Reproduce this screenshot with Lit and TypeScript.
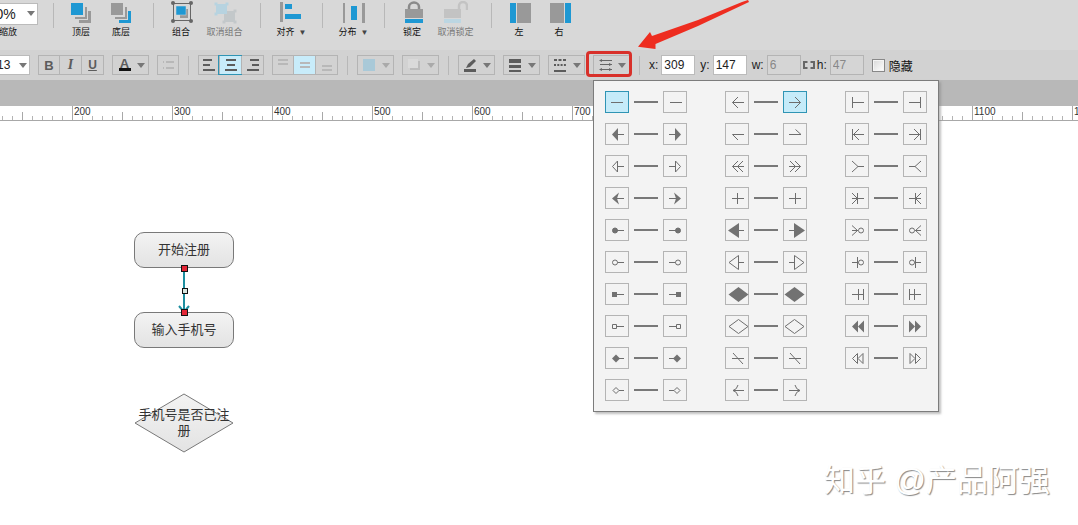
import { LitElement, html, svg, css, type SVGTemplateResult } from "lit";
import { customElement, property, state } from "lit/decorators.js";
import { classMap } from "lit/directives/class-map.js";

type Shape = SVGTemplateResult;

interface Ending {
  name: string;
  left: Shape;
  right?: Shape;
}

const line = (d: string): Shape => svg`<path d=${d} fill="none" stroke="#6e6e6e"/>`;
const solid = (d: string): Shape => svg`<path d=${d} fill="#727272" stroke="none"/>`;
const dot = (cx: number, r: number, fill: string): Shape =>
  svg`<circle cx=${cx} cy="11.5" r=${r} fill=${fill} stroke="#6e6e6e"/>`;

const ENDINGS: Ending[] = [
  { name: "none", left: line("M6 11.5H18") },
  { name: "solid triangle", left: svg`${solid("M7 11.5L13 5V18Z")}${line("M12 11.5H19")}` },
  { name: "open triangle", left: line("M7.5 11.5L12.5 6V17ZM12.5 11.5H19") },
  { name: "stealth", left: svg`${solid("M7 11.5L14 5.5L12 11.5L14 17.5Z")}${line("M11 11.5H19")}` },
  { name: "solid circle", left: svg`${dot(10, 2.5, "#727272")}${line("M12 11.5H19")}` },
  { name: "open circle", left: svg`${dot(10, 2.5, "none")}${line("M12.5 11.5H19")}` },
  { name: "solid square", left: svg`${solid("M7 9H12V14H7Z")}${line("M12 11.5H19")}` },
  { name: "open square", left: line("M7.5 9.5H11.5V13.5H7.5ZM11.5 11.5H19") },
  { name: "solid small diamond", left: svg`${solid("M7 11.5L11 7.5L15 11.5L11 15.5Z")}${line("M14 11.5H19")}` },
  { name: "open small diamond", left: line("M8 11.5L11 8.5L14 11.5L11 14.5ZM14 11.5H19") },

  { name: "arrow", left: line("M19 11.5H7.5M13 6L7.5 11.5L13 17") },
  { name: "half arrow", left: line("M19 11.5H7.5L13 17"), right: line("M6 11.5H18L12.5 6.5") },
  { name: "double arrow", left: line("M19 11.5H7.5M13 6L7.5 11.5L13 17M18 6L12.5 11.5L18 17") },
  { name: "cross", left: line("M7 11.5H19M12.5 6V17") },
  { name: "large solid triangle", left: svg`${solid("M3 11.5L14 4V19Z")}${line("M14 11.5H19")}` },
  { name: "large open triangle", left: line("M4 11.5L13.5 4.5V18.5ZM13.5 11.5H19") },
  { name: "large solid diamond", left: solid("M3.5 11.5L13.5 4L23.5 11.5L13.5 19Z") },
  { name: "large open diamond", left: line("M4 11.5L13.5 4.5L23 11.5L13.5 18.5Z") },
  { name: "slash", left: line("M7 11.5H19M8 6L18 17"), right: line("M6 11.5H18M7 6L17 17") },
  { name: "curved arrow", left: line("M19 11.5H8M13 6Q12 10.5 8 11.5Q12 12.5 13 17") },

  { name: "bar", left: line("M7.5 6V17M7.5 11.5H19") },
  { name: "bar arrow", left: line("M7.5 6V17M19 11.5H8M14 6L8.5 11.5L14 17") },
  { name: "many", left: line("M7 6L13 11.5L7 17M13 11.5H19") },
  { name: "one or many", left: line("M7 6L12.5 11.5L7 17M12.5 6V17M7 11.5H19") },
  { name: "zero or many", left: svg`${line("M7 6.5L12.5 11.5L7 16.5M7 11.5H13")}${dot(16, 2.5, "none")}` },
  { name: "zero or one", left: svg`${line("M7 11.5H13.5M12.5 6V17")}${dot(16, 2.5, "none")}` },
  { name: "one and only one", left: line("M7 11.5H19M13.5 6V17M18.5 6V17") },
  { name: "solid double triangle", left: solid("M7 11.5L13 5.5V17.5ZM13 11.5L19 5.5V17.5Z") },
  { name: "open double triangle", left: line("M7.5 11.5L12.5 6.5V16.5ZM13 11.5L18 6.5V16.5Z") },
];

const caret = html`<svg class="caret" width="8" height="5" viewBox="0 0 8 5" aria-hidden="true"><path d="M0 0H8L4 5Z" fill="currentColor"/></svg>`;

const bars = (rects: number[][]) => html`<svg width="20" height="18" viewBox="0 0 20 18" aria-hidden="true">
  ${rects.map(([x, y, w]) => svg`<rect x=${x} y=${y} width=${w} height="2" fill="currentColor"/>`)}
</svg>`;

const bigIcon = (content: Shape) => html`<svg width="24" height="24" viewBox="0 0 24 24" aria-hidden="true">${content}</svg>`;

const ICONS = {
  front: bigIcon(svg`<rect x="10" y="10" width="12" height="12" fill="#999"/><rect x="5" y="5" width="14" height="14" fill="#d8d8d8"/><rect x="6" y="6" width="12" height="12" fill="#999"/><rect x="1" y="1" width="15" height="15" fill="#d8d8d8"/><rect x="2" y="2" width="12" height="12" fill="#1e98d3"/>`),
  back: bigIcon(svg`<rect x="10" y="10" width="12" height="12" fill="#1e98d3"/><rect x="5" y="5" width="14" height="14" fill="#d8d8d8"/><rect x="6" y="6" width="12" height="12" fill="#999"/><rect x="1" y="1" width="15" height="15" fill="#d8d8d8"/><rect x="2" y="2" width="12" height="12" fill="#999"/>`),
  group: bigIcon(svg`<rect x="4.500" y="2.500" width="17" height="17" fill="none" stroke="#666"/><rect x="11" y="8" width="8" height="9" fill="#999"/><rect x="7" y="5" width="10" height="9" fill="#1e98d3" stroke="#d8d8d8" stroke-width=".5"/><g fill="#666"><circle cx="4" cy="2" r="2"/><circle cx="22" cy="2" r="2"/><circle cx="4" cy="20" r="2"/><circle cx="22" cy="20" r="2"/></g>`),
  ungroup: bigIcon(svg`<g fill="#c3c8ca"><rect x="11" y="10" width="11" height="11"/><rect x="9.500" y="8.500" width="3" height="3"/><rect x="20.500" y="8.500" width="3" height="3"/><rect x="9.500" y="19.500" width="3" height="3"/><rect x="20.500" y="19.500" width="3" height="3"/></g><g fill="#b7d3e0"><rect x="3" y="3" width="11" height="10"/><rect x="1.500" y="1.500" width="3" height="3"/><rect x="12.500" y="1.500" width="3" height="3"/><rect x="1.500" y="11.500" width="3" height="3"/></g>`),
  align: bigIcon(svg`<rect x="0" y="1" width="3" height="20" fill="#999"/><rect x="5" y="3" width="7" height="5" fill="#1e98d3"/><rect x="5" y="13" width="16" height="5" fill="#1e98d3"/>`),
  distribute: bigIcon(svg`<rect x="1" y="2" width="2" height="20" fill="#999"/><rect x="20" y="2" width="3" height="20" fill="#999"/><rect x="9" y="5" width="6" height="14" fill="#1e98d3"/>`),
  lock: bigIcon(svg`<path d="M9 9V6a5 4.500 0 0 1 10 0V9" fill="none" stroke="#8a8a8a" stroke-width="2.500"/><rect x="5" y="8" width="18" height="9" fill="#999"/><rect x="5" y="18" width="18" height="4" fill="#1e98d3"/>`),
  unlock: bigIcon(svg`<path d="M15 9V5a4 4 0 0 1 8 0V9" fill="none" stroke="#c3c3c3" stroke-width="2.500"/><rect x="0" y="8" width="17" height="9" fill="#c3c3c3"/><rect x="0" y="18" width="17" height="4" fill="#bcd6e2"/>`),
  left: bigIcon(svg`<rect x="3" y="2" width="6" height="20" fill="#1e98d3"/><rect x="10" y="2" width="14" height="20" fill="#999"/>`),
  right: bigIcon(svg`<rect x="3" y="2" width="14" height="20" fill="#999"/><rect x="18" y="2" width="6" height="20" fill="#1e98d3"/>`),
};

@customElement("ending-picker")
class EndingPicker extends LitElement {
  @state() private start = 0;
  @state() private end = 10;

  static styles = css`
    :host {
      display: grid;
      grid-template-rows: repeat(10, 22px);
      grid-auto-flow: column;
      grid-auto-columns: max-content;
      gap: 10px 38px;
      padding: 10px 11px;
      background: #f3f3f3;
      border: 1px solid #7c7c7c;
      box-shadow: 2px 2px 2px #8888;
    }
    .pair { display: flex; align-items: center; gap: 5px; }
    .rule { width: 24px; height: 2px; background: #787878; }
    .cell {
      width: 24px;
      height: 22px;
      padding: 0;
      background: #f3f3f3;
      border: 1px solid #b4b4b4;
    }
    .cell svg { display: block; overflow: visible; }
    .chosen { background: #c5ebf9; border-color: #2f94b4; }
    .flip { transform: translateX(25px) scaleX(-1); }
  `;

  private cell(i: number, side: "left" | "right") {
    const e = ENDINGS[i];
    const chosen = side === "left" ? this.start === i : this.end === i;
    const shape = side === "left" ? e.left : e.right ?? svg`<g class="flip">${e.left}</g>`;
    return html`<button
      class=${classMap({ cell: true, chosen })}
      aria-label=${`${side} ${e.name}`}
      aria-pressed=${chosen}
      @click=${() => (side === "left" ? (this.start = i) : (this.end = i))}
    ><svg width="22" height="20" viewBox="1 1 22 20">${shape}</svg></button>`;
  }

  render() {
    return ENDINGS.map((_, i) => html`<div class="pair">
      ${this.cell(i, "left")}<span class="rule"></span>${this.cell(i, "right")}
    </div>`);
  }
}

@customElement("canvas-ruler")
class CanvasRuler extends LitElement {
  @property({ type: Number }) from = 200;

  private refresh = () => this.requestUpdate();

  connectedCallback() {
    super.connectedCallback();
    window.addEventListener("resize", this.refresh);
  }

  disconnectedCallback() {
    window.removeEventListener("resize", this.refresh);
    super.disconnectedCallback();
  }

  static styles = css`
    :host {
      display: flex;
      height: 14px;
      overflow: hidden;
      background: #fff;
      border-bottom: 1px solid #a8a8a8;
    }
    .segment {
      flex: none;
      box-sizing: border-box;
      width: 100px;
      border-left: 1px solid #a8a8a8;
      padding-left: 1px;
      font-size: 10px;
      line-height: 12px;
      color: #333;
      background:
        linear-gradient(#a8a8a8, #a8a8a8) 49px 100% / 1px 8px no-repeat,
        repeating-linear-gradient(to right, transparent 0 9px, #b4b4b4 9px 10px) 0 100% / 100% 4px no-repeat;
    }
    .segment:first-child { margin-left: -28px; }
  `;

  render() {
    const count = Math.ceil((window.innerWidth - 72) / 100);
    return html`<span class="segment"></span>${Array.from(
      { length: count },
      (_, i) => html`<span class="segment">${this.from + i * 100}</span>`
    )}`;
  }
}

@customElement("app-root")
class AppRoot extends LitElement {
  @state() private pickerOpen = true;

  static styles = css`
    :host {
      display: flex;
      flex-direction: column;
      min-height: 100vh;
      overflow: hidden;
      background: #fff;
      color: #222;
      font-family: "Liberation Sans", "Noto Sans CJK SC", sans-serif;
      font-size: 12px;
    }
    button, select, input { font: inherit; color: inherit; border-radius: 0; }
    svg { display: block; }

    .main-bar { display: flex; height: 50px; background: #d8d8d8; }
    .group { display: flex; padding: 0 12px 0 7px; }
    .single { padding: 0; }
    .divider { flex: none; width: 1px; height: 25px; margin-top: 3px; background: #b8b8b8; }
    .tool {
      display: flex;
      flex-direction: column;
      align-items: center;
      width: 40px;
      padding: 1px 0 0;
      border: 0;
      background: none;
      font-size: 9px;
      line-height: 14px;
      white-space: nowrap;
      color: #111;
    }
    .wide { width: 47px; }
    .menu { width: 61px; }
    .tool:disabled { color: #777; }
    .down { margin-left: 4px; font-size: 8px; color: #444; }
    .zoom {
      display: flex;
      flex-direction: column;
      align-items: center;
      width: 60px;
      margin: 3px 15px 0 -22px;
      font-size: 9px;
      line-height: 14px;
      color: #111;
    }
    .picker { position: relative; color: #222; font-size: 12px; }
    .picker select {
      display: block;
      box-sizing: border-box;
      height: 20px;
      padding: 0 2px;
      background: #fff;
      border: 1px solid #bbb;
      appearance: none;
    }
    .picker .caret { position: absolute; right: 3px; top: 8px; color: #777; pointer-events: none; }
    .zoom .picker { width: 60px; font-size: 14px; }
    .zoom select { width: 60px; height: 22px; padding: 0 1px; }
    .size { width: 56px; margin-left: -26px; font-size: 12px; }
    .size select { width: 56px; padding-left: 22px; }

    .style-bar {
      display: flex;
      align-items: center;
      gap: 8px;
      height: 30px;
      background: #d2d2d2;
    }
    .style-bar .divider { height: 19px; margin: 0 1px; }
    .buttons { display: flex; border: 1px solid #b4b4b4; }
    .buttons button {
      display: flex;
      align-items: center;
      justify-content: center;
      width: 20px;
      height: 18px;
      padding: 0;
      border: 0;
      background: none;
      color: #5c5c5c;
      font-size: 13px;
    }
    .buttons button + button { width: 22px; border-left: 1px solid #b4b4b4; }
    .buttons button.on { background: #c8ecfa; outline: 1px solid #2f94b4; }
    .buttons button.soft { background: #c8ecfa; }
    .buttons button:disabled { color: #b8b8b8; }
    .bold { font-weight: bold; }
    .buttons .italic { font: italic bold 14px "Liberation Serif", serif; }
    .buttons .underline { font-weight: bold; font-size: 12px; text-decoration: underline; }
    .drop {
      box-sizing: border-box;
      display: flex;
      align-items: center;
      justify-content: space-between;
      width: 37px;
      height: 20px;
      padding: 0 3px 0 1px;
      border: 1px solid #b4b4b4;
      background: none;
      color: #5c5c5c;
    }
    .drop .caret { color: #777; }
    .drop:disabled .caret { color: #aaa; }

    .ending { position: relative; z-index: 2; }
    .frame {
      position: absolute;
      inset: -4px -2px -2px -7px;
      border: 3px solid #d8302a;
      border-radius: 4px;
      pointer-events: none;
    }
    .pointer { position: absolute; left: 45px; bottom: 24px; pointer-events: none; }
    .popup { position: absolute; left: 0; top: 25px; }

    .fields { display: flex; align-items: center; gap: 5px; }
    .fields label { display: flex; align-items: center; gap: 3px; }
    .fields input[type="text"] {
      box-sizing: border-box;
      width: 34px;
      height: 20px;
      padding: 0 2px;
      border: 1px solid #bbb;
      background: #fff;
    }
    .fields input[type="text"]:disabled { background: #d5d5d5; color: #888; border-color: #b4b4b4; }
    .linked { display: flex; align-items: center; gap: 2px; }
    .fields .hide { margin-left: 3px; gap: 4px; color: #111; }
    .hide input {
      width: 13px;
      height: 13px;
      margin: 0;
      appearance: none;
      border: 1px solid #888;
      background: linear-gradient(135deg, #d8d8d8, #fff);
      box-shadow: inset 0 0 0 1px #f4f4f4;
    }

    .tabs { height: 26px; background: #b8b8b8; }

    .canvas { position: relative; flex: 1; font-size: 13px; line-height: 16px; color: #333; }
    .node {
      position: absolute;
      box-sizing: border-box;
      display: flex;
      align-items: center;
      justify-content: center;
      left: 134px;
      width: 100px;
      height: 36px;
      border: 1px solid #797979;
      border-radius: 10px;
      background: linear-gradient(#f3f3f3, #e3e3e3);
    }
    .begin { top: 111px; }
    .phone { top: 191px; }
    .decision { position: absolute; left: 134px; top: 272px; width: 100px; height: 60px; }
    .decision svg { position: absolute; inset: 0; }
    .decision span {
      position: relative;
      display: flex;
      align-items: center;
      height: 100%;
      padding: 0 3px;
      text-align: center;
    }
    .connector { position: absolute; left: 176px; top: 143px; }
    .credit {
      position: absolute;
      right: 28px;
      bottom: 26px;
      font-size: 31px;
      line-height: 36px;
      color: #fff;
      text-shadow: 1px 1px 1px #888;
    }
  `;

  private tool(icon: unknown, label: string, size = "", disabled = false) {
    const menu = size === "menu";
    return html`<button class=${`tool ${size}`} ?disabled=${disabled}>
      ${icon}<span>${label}${menu ? html`<span class="down">▼</span>` : ""}</span>
    </button>`;
  }

  private drop(name: string, icon: unknown, disabled = false) {
    return html`<button class="drop" aria-label=${name} ?disabled=${disabled}>${icon}${caret}</button>`;
  }

  private field(name: string, value: string, disabled = false) {
    return html`<label>${name}:<input type="text" .value=${value} ?disabled=${disabled}></label>`;
  }

  private mainBar() {
    const divider = html`<span class="divider"></span>`;
    return html`<div class="main-bar">
      <div class="zoom">
        <div class="picker"><select id="zoom"><option>100%</option></select>${caret}</div>
        <label for="zoom">缩放</label>
      </div>
      ${divider}
      <div class="group">${this.tool(ICONS.front, "顶层")}${this.tool(ICONS.back, "底层")}</div>
      ${divider}
      <div class="group">${this.tool(ICONS.group, "组合")}${this.tool(ICONS.ungroup, "取消组合", "wide", true)}</div>
      ${divider}
      <div class="group single">${this.tool(ICONS.align, "对齐", "menu")}</div>
      ${divider}
      <div class="group single">${this.tool(ICONS.distribute, "分布", "menu")}</div>
      ${divider}
      <div class="group">${this.tool(ICONS.lock, "锁定")}${this.tool(ICONS.unlock, "取消锁定", "wide", true)}</div>
      ${divider}
      <div class="group">${this.tool(ICONS.left, "左")}${this.tool(ICONS.right, "右")}</div>
    </div>`;
  }

  private styleBar() {
    const divider = html`<span class="divider"></span>`;
    const icon = (content: Shape) => html`<svg width="22" height="18" viewBox="0 0 22 18" aria-hidden="true">${content}</svg>`;
    return html`<div class="style-bar">
      <div class="picker size"><select aria-label="font size"><option>13</option></select>${caret}</div>
      <div class="buttons">
        <button class="bold">B</button><button class="italic">I</button><button class="underline">U</button>
      </div>
      ${this.drop("text colour", icon(svg`<text x="10.500" y="12" text-anchor="middle" font-size="13" font-weight="bold" fill="#5c5c5c">A</text><rect x="5" y="12" width="12" height="3" fill="#111"/>`))}
      <div class="buttons"><button disabled aria-label="list">${bars([[5, 5, 1], [8, 5, 8], [5, 11, 1], [8, 11, 8]])}</button></div>
      ${divider}
      <div class="buttons">
        <button aria-label="align left">${bars([[4, 3, 9], [4, 8, 7], [4, 13, 12]])}</button>
        <button class="on" aria-label="align centre">${bars([[5, 3, 10], [6, 8, 8], [4, 13, 12]])}</button>
        <button aria-label="align right">${bars([[7, 3, 9], [9, 8, 7], [4, 13, 12]])}</button>
      </div>
      <div class="buttons">
        <button disabled aria-label="top">${bars([[5, 3, 10], [5, 7, 10]])}</button>
        <button disabled class="soft" aria-label="middle">${bars([[5, 6, 10], [5, 10, 10]])}</button>
        <button disabled aria-label="bottom">${bars([[5, 9, 10], [5, 13, 10]])}</button>
      </div>
      ${divider}
      ${this.drop("fill", icon(svg`<rect x="4" y="3" width="12" height="12" fill="#a9c9d8"/>`), true)}
      ${this.drop("shadow", icon(svg`<path d="M6 13H15V5" fill="none" stroke="#bcbcbc" stroke-width="2"/><rect x="4" y="3" width="10" height="9" fill="#dadada"/>`), true)}
      ${divider}
      ${this.drop("line colour", icon(svg`<rect x="4" y="13" width="12" height="3" fill="#5c5c5c"/><path d="M6 12L8 8L14 3L16 5L10 11Z" fill="#5c5c5c"/>`))}
      ${this.drop("line width", icon(svg`<rect x="4" y="3" width="12" height="4" fill="#5c5c5c"/><rect x="4" y="9" width="12" height="3" fill="#5c5c5c"/><rect x="4" y="14" width="12" height="2" fill="#5c5c5c"/>`))}
      ${this.drop("line style", icon(svg`<g stroke="#5c5c5c" stroke-width="2"><path d="M4 4H16" stroke-dasharray="3 1.500"/><path d="M4 9H16" stroke-dasharray="2 1.300"/><path d="M4 15H16"/></g>`))}
      <div class="ending">
        <button class="drop" aria-label="line endings" aria-expanded=${this.pickerOpen} @click=${() => (this.pickerOpen = !this.pickerOpen)}>
          ${icon(svg`<g stroke="#666" fill="#666"><path d="M5 4.500H17M5 8.500H17M5 13.500H17"/><path d="M4 4.500L7 3V6ZM17 8.500L14 7V10ZM4 13.500L7 12V15ZM17 13.500L14 12V15Z" stroke="none"/></g>`)}${caret}
        </button>
        <span class="frame"></span>
        <svg class="pointer" width="112" height="51" viewBox="0 0 112 51" aria-hidden="true">
          <path d="M0 46.700L12 32L14 36L60 20L104 2L110 0L111 2L60 26L17.500 44V49Z" fill="#ee2d20"/>
        </svg>
        ${this.pickerOpen ? html`<ending-picker class="popup"></ending-picker>` : ""}
      </div>
      ${divider}
      <div class="fields">
        ${this.field("x", "309")}${this.field("y", "147")}
        <div class="linked">
          ${this.field("w", "6", true)}
          <svg width="12" height="10" viewBox="0 0 12 10" aria-hidden="true"><path d="M4.500 2H1V8H4.500M7.500 2H11V8H7.500" fill="none" stroke="#666" stroke-width="2"/></svg>
          ${this.field("h", "47", true)}
        </div>
        <label class="hide"><input type="checkbox">隐藏</label>
      </div>
    </div>`;
  }

  render() {
    return html`
      ${this.mainBar()}
      ${this.styleBar()}
      <div class="tabs"></div>
      <canvas-ruler from="200"></canvas-ruler>
      <div class="canvas">
        <div class="node begin">开始注册</div>
        <div class="node phone">输入手机号</div>
        <div class="decision">
          <svg width="100" height="60" viewBox="0 0 100 60" aria-hidden="true">
            <defs><linearGradient id="fade" x2="0" y2="1"><stop stop-color="#f3f3f3"/><stop offset="1" stop-color="#e3e3e3"/></linearGradient></defs>
            <path d="M1 30L50 1L99 30L50 59Z" fill="url(#fade)" stroke="#797979"/>
          </svg>
          <span>手机号是否已注册</span>
        </div>
        <svg class="connector" width="16" height="54" viewBox="0 0 16 54" aria-hidden="true">
          <path d="M8 6V48M3 42L8 48L13 42" fill="none" stroke="#1d8fa0" stroke-width="2"/>
          <g stroke="#111"><rect x="5.500" y="1.500" width="6" height="6" fill="#e32636"/><rect x="5.500" y="45.500" width="6" height="6" fill="#e32636"/><rect x="6.500" y="24.500" width="5" height="5" fill="#d8e6e0"/></g>
        </svg>
        <div class="credit">知乎 @产品阿强</div>
      </div>`;
  }
}
